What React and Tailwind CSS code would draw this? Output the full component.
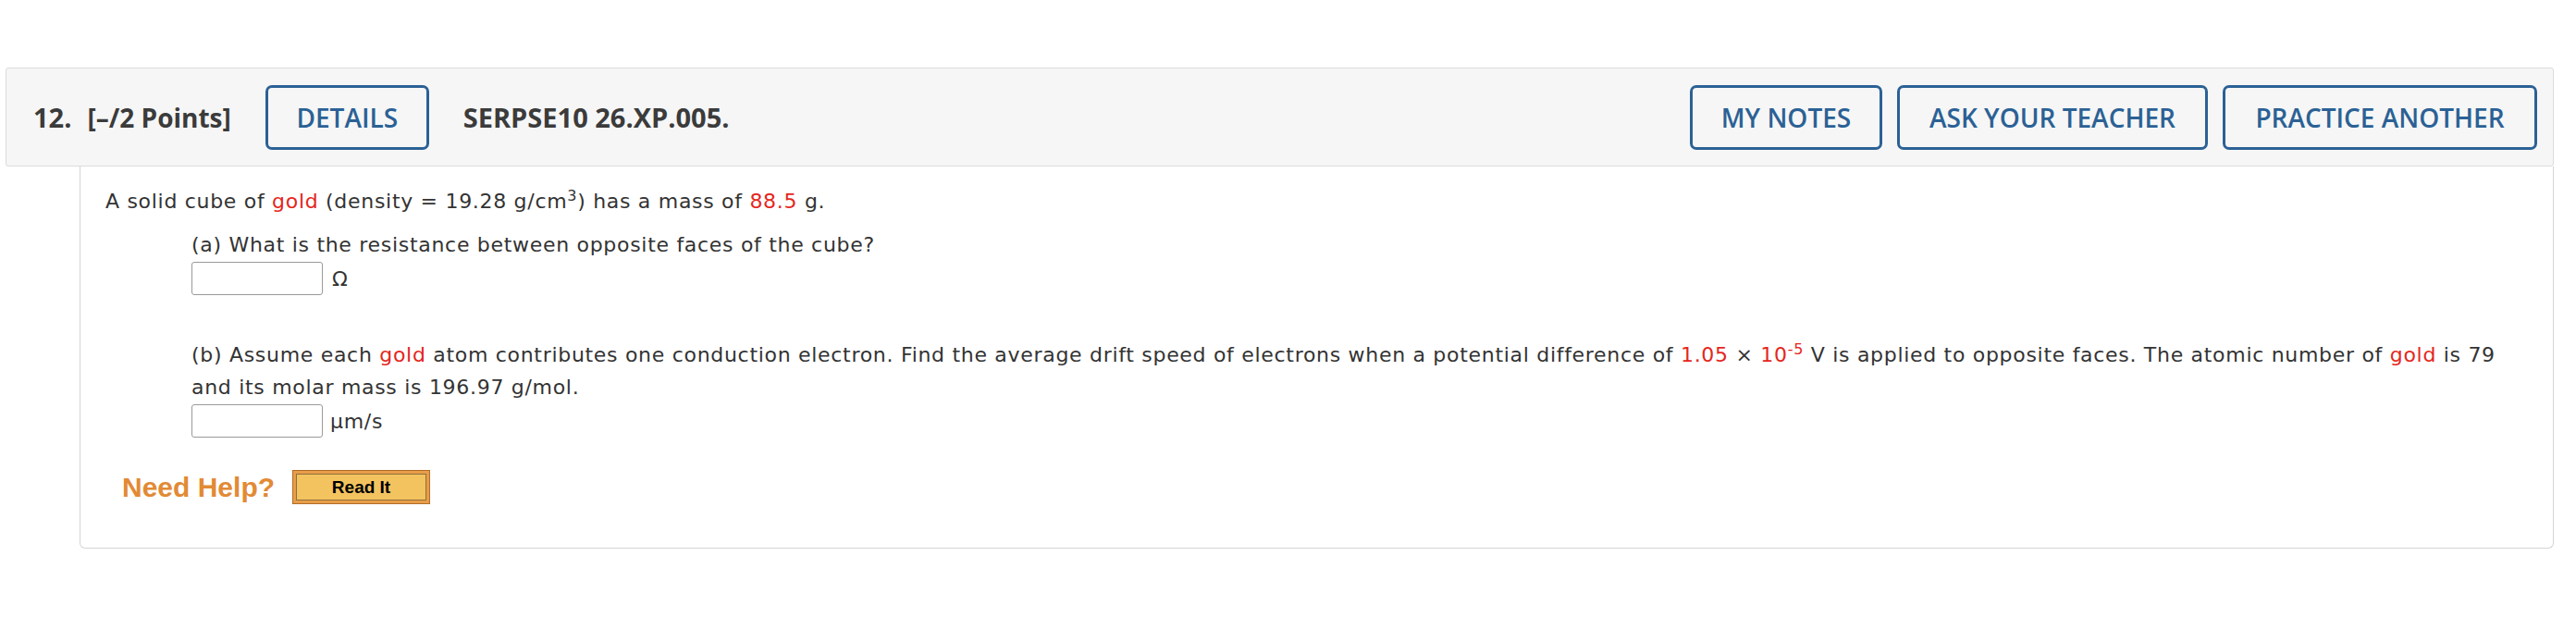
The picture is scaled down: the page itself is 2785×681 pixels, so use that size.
export default function App() {
  const red = "text-[#e5261c]";
  return (
    <div className="w-full min-h-[681px] bg-white pt-[73px] pl-[6px] pr-[24px]">
      <div className="flex items-center h-[107px] bg-[#f6f6f6] border border-[#dcdcdc] rounded-[3px] pl-[29px] pr-[17px] text-[#3b3b3b] font-['Open_Sans',sans-serif]">
        <span className="font-bold text-[29px] leading-none">12.</span>
        <span className="ml-[17px] font-bold text-[28px] leading-none">[–/2 Points]</span>
        <button className="ml-[37px] w-[177px] h-[70px] border-[3px] border-[#2b6195] rounded-[7px] text-[#2b6195] text-[28px] font-semibold leading-none">DETAILS</button>
        <span className="ml-[37px] font-bold text-[29px] leading-none">SERPSE10 26.XP.005.</span>
        <div className="ml-auto flex gap-[16px]">
          <button className="w-[208px] h-[70px] border-[3px] border-[#2b6195] rounded-[7px] text-[#2b6195] text-[28px] font-semibold leading-none">MY NOTES</button>
          <button className="w-[336px] h-[70px] border-[3px] border-[#2b6195] rounded-[7px] text-[#2b6195] text-[28px] font-semibold leading-none">ASK YOUR TEACHER</button>
          <button className="w-[340px] h-[70px] border-[3px] border-[#2b6195] rounded-[7px] text-[#2b6195] text-[28px] font-semibold leading-none">PRACTICE ANOTHER</button>
        </div>
      </div>
      <div className="ml-[80px] h-[413px] border-x border-b border-[#d4d4d4] rounded-b-[6px] pl-[27px] pt-[20px] text-[#333333] text-[22px] leading-[35px] tracking-[0.7px] font-['DejaVu_Sans',Verdana,sans-serif]">
        <p>
          A solid cube of <span className={red}>gold</span> (density = 19.28 g/cm<sup className="text-[16px]">3</sup>) has a mass of <span className={red}>88.5</span> g.
        </p>
        <div className="ml-[93px] mt-[12px]">
          <p>(a) What is the resistance between opposite faces of the cube?</p>
          <div className="flex items-center mt-[1px]">
            <div className="w-[142px] h-[36px] border border-[#9a9a9a] rounded-[3px] bg-white"></div>
            <span className="ml-[10px]">Ω</span>
          </div>
          <p className="mt-[47px] pr-[20px]">
            (b) Assume each <span className={red}>gold</span> atom contributes one conduction electron. Find the average drift speed of electrons when a potential difference of <span className={red}>1.05</span> × <span className={red}>10<sup className="text-[16px]">-5</sup></span> V is applied to opposite faces. The atomic number of <span className={red}>gold</span> is 79 and its molar mass is 196.97 g/mol.
          </p>
          <div className="flex items-center mt-[1px]">
            <div className="w-[142px] h-[36px] border border-[#9a9a9a] rounded-[3px] bg-white"></div>
            <span className="ml-[8px]">μm/s</span>
          </div>
        </div>
        <div className="flex items-center mt-[35px] ml-[18px]">
          <span className="font-['Liberation_Sans',Arial,sans-serif] font-bold text-[30px] tracking-normal text-[#e28a35] leading-none">Need Help?</span>
          <div className="ml-[19px] w-[149px] h-[37px] bg-[#e89d48] border border-[#b06d2a] p-[3px]">
            <div className="w-full h-full bg-[#f3c35f] border border-[#8f6f3c] flex items-center justify-center font-['Liberation_Sans',Arial,sans-serif] font-bold text-[19px] tracking-normal text-black leading-none">Read It</div>
          </div>
        </div>
      </div>
    </div>
  );
}
